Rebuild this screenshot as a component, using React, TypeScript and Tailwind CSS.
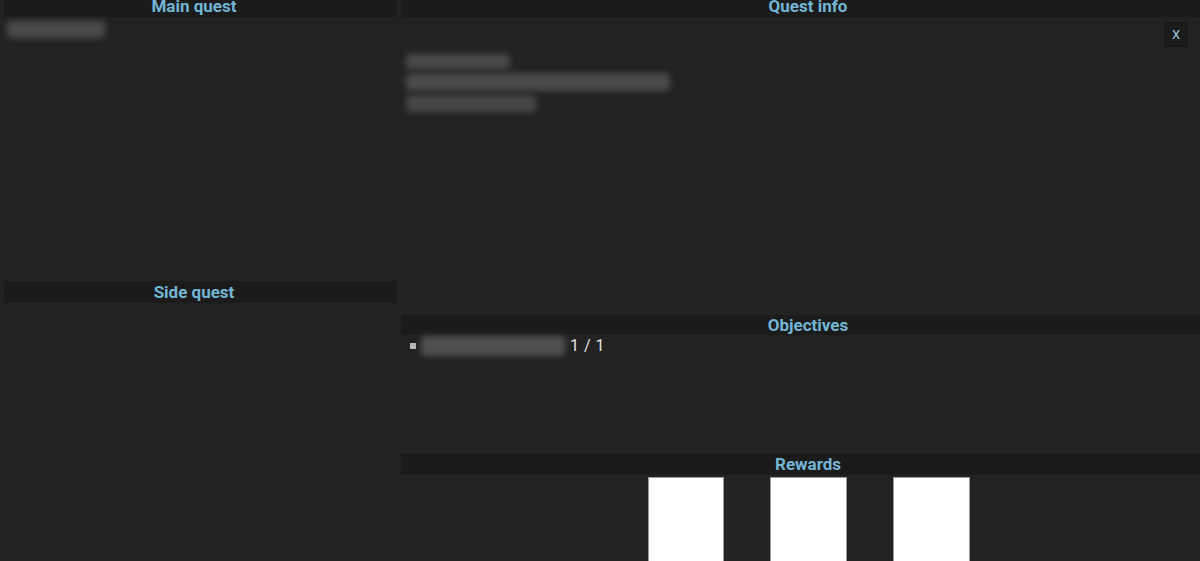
import React from "react";

const HEAD =
  "flex shrink-0 items-center justify-center bg-[#1b1b1b] font-['Roboto',sans-serif] text-[17px] font-bold leading-none text-[#72b5d4]";

function Blur({ className }: { className: string }) {
  return <div className={`shrink-0 rounded-sm blur-[3px] ${className}`} />;
}

export default function App() {
  return (
    <div className="h-[561px] w-[1200px] overflow-hidden bg-[#222222] font-['Roboto',sans-serif]">
      <div className="-mt-[5px] flex">
        {/* left column */}
        <div className="ml-[4px] flex w-[393px] shrink-0 flex-col">
          <div className={`${HEAD} h-[22px] pr-[13px]`}>Main quest</div>
          <div className="h-[264px] shrink-0 px-[3px] pt-[4px]">
            <Blur className="h-[17px] w-[98px] bg-[#4a4a4a]" />
          </div>
          <div className={`${HEAD} h-[22px] pr-[13px]`}>Side quest</div>
          <div className="h-[260px]" />
        </div>

        {/* right column */}
        <div className="relative ml-[4px] flex w-[814px] shrink-0 flex-col">
          <div className={`${HEAD} h-[22px]`}>Quest info</div>
          <button className="absolute left-[763px] top-[27px] flex h-[25px] w-[24px] items-center justify-center border border-[#181818] bg-[#1b1b1b] text-[13px] text-[#9acbe0]">
            X
          </button>
          <div className="flex h-[298px] shrink-0 flex-col gap-[4px] pl-[5px] pt-[37px]">
            <Blur className="h-[15px] w-[104px] bg-[#4a4a4a]" />
            <Blur className="h-[18px] w-[264px] bg-[#4a4a4a]" />
            <Blur className="h-[17px] w-[130px] bg-[#474747]" />
          </div>
          <div className={`${HEAD} h-[20px]`}>Objectives</div>
          <div className="h-[118px] shrink-0 pl-[9px] pt-[1px]">
            <div className="flex items-center">
              <span className="mr-[5px] h-[6px] w-[6px] bg-[#b9b9b9]" />
              <Blur className="h-[20px] w-[144px] bg-[#505050]" />
              <span className="ml-[5px] text-[16px] leading-[20px] tracking-[0.5px] text-[#e2e2e2]">
                1 / 1
              </span>
            </div>
          </div>
          <div className={`${HEAD} h-[22px]`}>Rewards</div>
          <div className="flex justify-center gap-[46px] pl-[2px] pt-[2px]">
            <div className="h-[90px] w-[76px] border border-b-0 border-[#999] bg-white" />
            <div className="h-[90px] w-[77px] border border-b-0 border-[#999] bg-white" />
            <div className="h-[90px] w-[77px] border border-b-0 border-[#999] bg-white" />
          </div>
        </div>
      </div>
    </div>
  );
}
